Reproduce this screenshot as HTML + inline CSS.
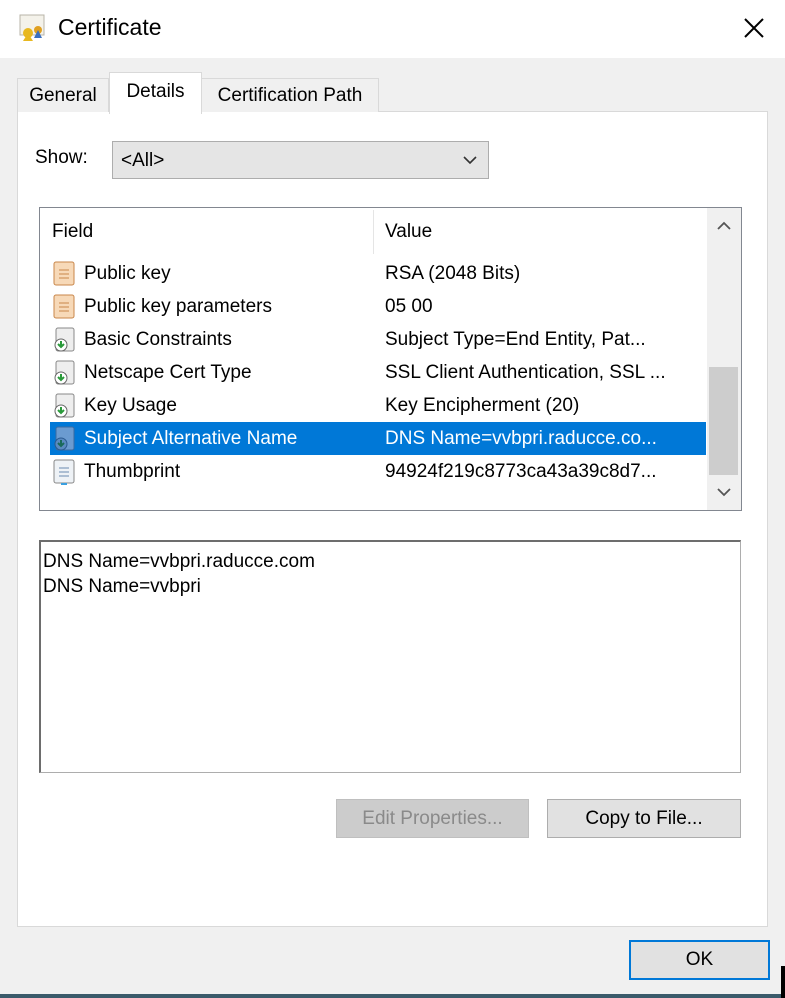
<!DOCTYPE html>
<html><head><style>
body{margin:0;width:785px;height:998px;background:#f0f0f0;font-family:"Liberation Sans",sans-serif;font-size:19px;color:#000;position:relative;overflow:hidden}
.a{position:absolute}
.btn{position:absolute;background:#e1e1e1;border:1px solid #adadad;text-align:center;box-sizing:border-box}
.row{position:absolute;left:50px;width:656px;height:33px;line-height:33px}
.row .f{position:absolute;left:34px}
.row .v{position:absolute;left:335px}
.ic{position:absolute;left:2px;top:4px;width:24px;height:26px}
</style></head><body>
<div class="a" style="left:0;top:0;width:785px;height:58px;background:#fff"></div>
<svg class="a" style="left:17px;top:13px" width="30" height="30" viewBox="0 0 30 30"><rect x="3" y="2" width="24" height="20" fill="#f4f2ea" stroke="#b8b4a8"/><circle cx="11" cy="20" r="5" fill="#e8b820"/><path d="M6 28 L11 20 L16 28Z" fill="#e8b820"/><circle cx="21" cy="17" r="4" fill="#e0a020"/><path d="M17 25 L21 17 L25 25Z" fill="#3a70c0"/></svg>
<div class="a" style="left:58px;top:14px;font-size:23px">Certificate</div>
<svg class="a" style="left:742px;top:16px" width="24" height="24"><path d="M3 3 L21 21 M21 3 L3 21" stroke="#000" stroke-width="2"/></svg>
<div class="a" style="left:17px;top:111px;width:749px;height:814px;background:#fff;border:1px solid #d9d9d9"></div>
<div class="a" style="left:17px;top:78px;width:90px;height:33px;background:#f0f0f0;border:1px solid #d9d9d9;border-bottom:none;line-height:34px;text-align:center">General</div>
<div class="a" style="left:109px;top:72px;width:91px;height:41px;background:#fff;border:1px solid #d9d9d9;border-bottom:none;line-height:38px;text-align:center">Details</div>
<div class="a" style="left:201px;top:78px;width:176px;height:33px;background:#f0f0f0;border:1px solid #d9d9d9;border-bottom:none;line-height:34px;text-align:center">Certification Path</div>
<div class="a" style="left:35px;top:147px">Show:</div>
<div class="a" style="left:112px;top:141px;width:377px;height:38px;background:#e5e5e5;border:1px solid #adadad;line-height:38px;box-sizing:border-box;padding-left:8px">&lt;All&gt;</div>
<svg class="a" style="left:462px;top:154px" width="16" height="12"><path d="M2 3 L8 9 L14 3" stroke="#333" stroke-width="1.6" fill="none"/></svg>
<div class="a" style="left:39px;top:207px;width:703px;height:304px;border:1px solid #828790;background:#fff;box-sizing:border-box"></div>
<div class="a" style="left:52px;top:221px">Field</div>
<div class="a" style="left:373px;top:210px;width:1px;height:44px;background:#e5e5e5"></div>
<div class="a" style="left:385px;top:221px">Value</div>
<div class="a" style="left:707px;top:208px;width:34px;height:302px;background:#f0f0f0"></div>
<div class="a" style="left:709px;top:367px;width:29px;height:108px;background:#cdcdcd"></div>
<svg class="a" style="left:716px;top:220px" width="16" height="12"><path d="M2 9 L8 3 L14 9" stroke="#555" stroke-width="1.8" fill="none"/></svg>
<svg class="a" style="left:716px;top:486px" width="16" height="12"><path d="M2 3 L8 9 L14 3" stroke="#555" stroke-width="1.8" fill="none"/></svg>

<div class="row" style="top:257px"><svg class="ic" viewBox="0 0 24 26"><rect x="2" y="1" width="20" height="23" rx="2" fill="#f7d9b8" stroke="#c8864a"/><path d="M7 9h10M7 13h10M7 17h10" stroke="#c8864a"/></svg><span class="f">Public key</span><span class="v">RSA (2048 Bits)</span></div>
<div class="row" style="top:290px"><svg class="ic" viewBox="0 0 24 26"><rect x="2" y="1" width="20" height="23" rx="2" fill="#f7d9b8" stroke="#c8864a"/><path d="M7 9h10M7 13h10M7 17h10" stroke="#c8864a"/></svg><span class="f">Public key parameters</span><span class="v">05 00</span></div>
<div class="row" style="top:323px"><svg class="ic" viewBox="0 0 24 26"><rect x="4" y="1" width="18" height="23" rx="2" fill="#eee" stroke="#888"/><circle cx="9" cy="18" r="6" fill="#fff" stroke="#666"/><path d="M9 14v6M6 17l3 3 3-3" stroke="#2a9a3a" stroke-width="2" fill="none"/></svg><span class="f">Basic Constraints</span><span class="v">Subject Type=End Entity, Pat...</span></div>
<div class="row" style="top:356px"><svg class="ic" viewBox="0 0 24 26"><rect x="4" y="1" width="18" height="23" rx="2" fill="#eee" stroke="#888"/><circle cx="9" cy="18" r="6" fill="#fff" stroke="#666"/><path d="M9 14v6M6 17l3 3 3-3" stroke="#2a9a3a" stroke-width="2" fill="none"/></svg><span class="f">Netscape Cert Type</span><span class="v">SSL Client Authentication, SSL ...</span></div>
<div class="row" style="top:389px"><svg class="ic" viewBox="0 0 24 26"><rect x="4" y="1" width="18" height="23" rx="2" fill="#eee" stroke="#888"/><circle cx="9" cy="18" r="6" fill="#fff" stroke="#666"/><path d="M9 14v6M6 17l3 3 3-3" stroke="#2a9a3a" stroke-width="2" fill="none"/></svg><span class="f">Key Usage</span><span class="v">Key Encipherment (20)</span></div>
<div class="row" style="top:422px;background:#0078d7;color:#fff"><svg class="ic" viewBox="0 0 24 26"><rect x="4" y="1" width="18" height="23" rx="2" fill="#6b9bd0" stroke="#3a6aa0"/><circle cx="9" cy="18" r="6" fill="#5a8ac0" stroke="#2a5a90"/><path d="M9 14v6M6 17l3 3 3-3" stroke="#1a6a5a" stroke-width="2" fill="none"/></svg><span class="f">Subject Alternative Name</span><span class="v">DNS Name=vvbpri.raducce.co...</span></div>
<div class="row" style="top:455px"><svg class="ic" viewBox="0 0 24 26"><rect x="2" y="1" width="20" height="23" rx="2" fill="#eef2f6" stroke="#888"/><path d="M7 9h10M7 13h10M7 17h10" stroke="#6a8ab0"/><path d="M9 25h6" stroke="#3aa0e0" stroke-width="2"/></svg><span class="f">Thumbprint</span><span class="v">94924f219c8773ca43a39c8d7...</span></div>

<div class="a" style="left:39px;top:540px;width:702px;height:233px;border:1px solid #adadad;border-top:2px solid #6d6d6d;border-left:2px solid #6d6d6d;background:#fff;box-sizing:border-box;padding:7px 2px;line-height:25px">DNS Name=vvbpri.raducce.com<br>DNS Name=vvbpri</div>
<div class="btn" style="left:336px;top:799px;width:193px;height:39px;line-height:37px;color:#8a8a8a;background:#ccc;border-color:#bfbfbf">Edit Properties...</div>
<div class="btn" style="left:547px;top:799px;width:194px;height:39px;line-height:37px">Copy to File...</div>
<div class="btn" style="left:629px;top:940px;width:141px;height:40px;line-height:36px;border:2px solid #0078d7">OK</div>
<div class="a" style="left:0;top:994px;width:785px;height:4px;background:#3a5a6a"></div>
<div class="a" style="left:781px;top:966px;width:4px;height:32px;background:#000"></div>
</body></html>
